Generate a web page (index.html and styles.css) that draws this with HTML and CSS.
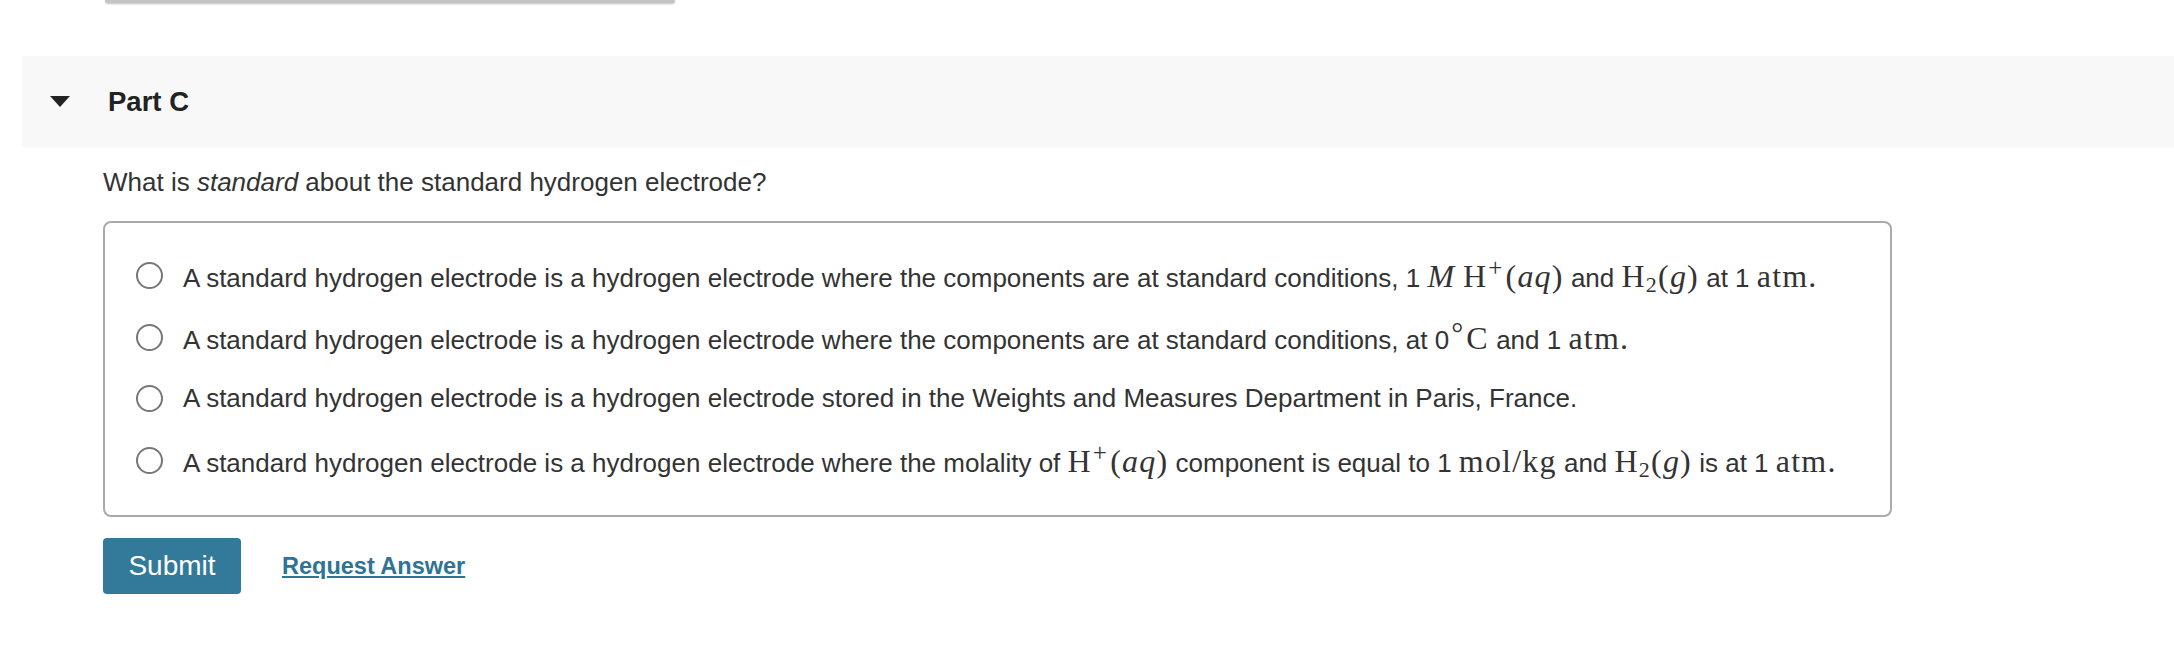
FILE: index.html
```html
<!DOCTYPE html>
<html lang="en">
<head>
<meta charset="utf-8">
<title>Part C</title>
<link rel="stylesheet" href="styles.css">
</head>
<body>
<div class="prev"></div>
<div class="part-header">
  <span class="caret"></span>
  <span class="part-title">Part C</span>
</div>
<div class="content">
  <div class="question">What is <em>standard</em> about the standard hydrogen electrode?</div>
  <div class="choices">
    <label class="choice"><span class="radio"></span><span class="txt">A standard hydrogen electrode is a hydrogen electrode where the components are at standard conditions, 1 <span class="m"><i>M</i>&#8201;H<span class="sup">+</span>(<i>aq</i>)</span> and <span class="m">H<span class="sub">2</span>(<i>g</i>)</span> at 1 <span class="m">atm.</span></span></label>
    <label class="choice"><span class="radio"></span><span class="txt">A standard hydrogen electrode is a hydrogen electrode where the components are at standard conditions, at 0<span class="m"><span class="sup deg">&#176;</span>C</span> and 1 <span class="m">atm.</span></span></label>
    <label class="choice"><span class="radio"></span><span class="txt">A standard hydrogen electrode is a hydrogen electrode stored in the Weights and Measures Department in Paris, France.</span></label>
    <label class="choice"><span class="radio"></span><span class="txt">A standard hydrogen electrode is a hydrogen electrode where the molality of <span class="m">H<span class="sup">+</span>(<i>aq</i>)</span> component is equal to 1 <span class="m">mol/kg</span> and <span class="m">H<span class="sub">2</span>(<i>g</i>)</span> is at 1 <span class="m">atm.</span></span></label>
  </div>
  <div class="actions">
    <button class="submit" type="button">Submit</button>
    <a class="request" href="#">Request Answer</a>
  </div>
</div>
</body>
</html>
```

FILE: styles.css
```css
body {
  margin: 0;
  background: #fff;
  color: #333;
  font-family: "Liberation Sans", Arial, Helvetica, sans-serif;
}

.prev {
  margin-left: 105px;
  width: 570px;
  height: 3px;
  background: #c4c4c4;
  border-radius: 0 0 6px 6px;
  box-shadow: 0 1px 2px rgba(0, 0, 0, 0.25);
}

.part-header {
  margin: 53px 0 0 22px;
  height: 91px;
  background: #f8f8f8;
  display: flex;
  align-items: center;
  padding-left: 28px;
}

.caret {
  width: 0;
  height: 0;
  border-left: 10px solid transparent;
  border-right: 10px solid transparent;
  border-top: 11px solid #222;
}

.part-title {
  margin-left: 38px;
  font-weight: bold;
  font-size: 27.5px;
  color: #222;
}

.content {
  padding-left: 103px;
}

.question {
  margin-top: 20px;
  font-size: 26px;
  line-height: 30px;
}

.choices {
  box-sizing: border-box;
  width: 1789px;
  margin-top: 24px;
  border: 2px solid #aaa;
  border-radius: 8px;
  padding: 22px 0 24px 31px;
}

.choice {
  height: 61.5px;
  display: flex;
  align-items: center;
  font-size: 26px;
  white-space: nowrap;
}

.radio {
  flex: none;
  box-sizing: border-box;
  width: 27px;
  height: 27px;
  border: 2px solid #777;
  border-radius: 50%;
  margin-right: 20px;
}

.m {
  font-family: "Liberation Serif", "Times New Roman", serif;
  font-size: 32px;
  letter-spacing: 1.2px;
  line-height: 1;
}

.m i {
  font-style: italic;
}

.sup {
  font-size: 25px;
  vertical-align: 11px;
  margin: 0 2px 0 1px;
}

.deg {
  font-size: 30px;
  vertical-align: 6px;
  margin: 0 2px 0 2px;
}

.sub {
  font-size: 22px;
  vertical-align: -5px;
}

.actions {
  margin-top: 21px;
  display: flex;
  align-items: center;
}

.submit {
  width: 138px;
  height: 56px;
  background: #33799a;
  color: #fff;
  border: none;
  border-radius: 4px;
  font-family: inherit;
  font-size: 28px;
  padding: 0;
}

.request {
  margin-left: 41px;
  font-weight: bold;
  font-size: 23.5px;
  color: #2f7396;
  text-decoration: underline;
}
```
